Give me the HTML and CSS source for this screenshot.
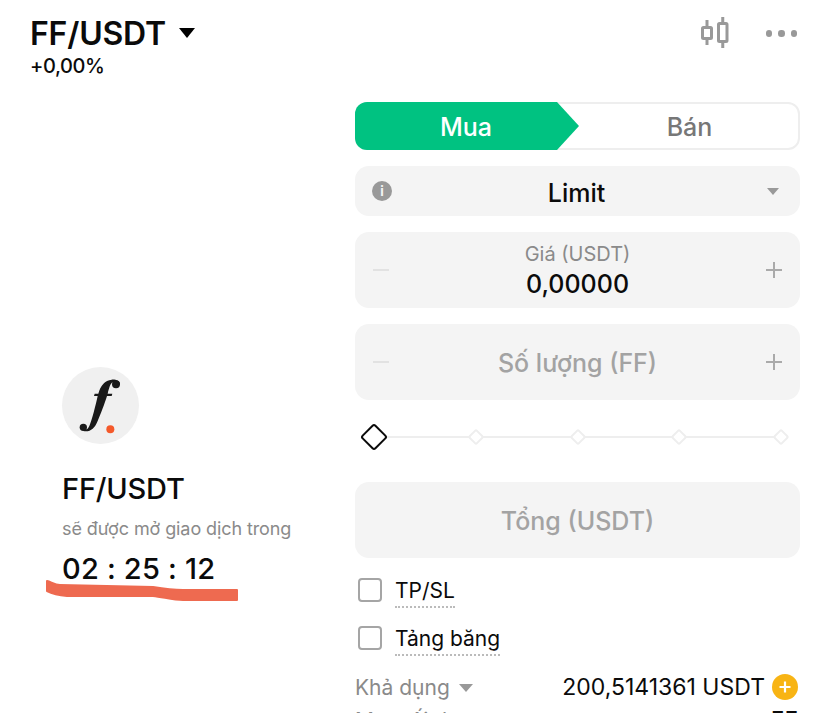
FILE: index.html
```html
<!DOCTYPE html>
<html lang="vi">
<head>
	<meta charset="UTF-8">
	<title>FF/USDT</title>
	<link rel="stylesheet" href="styles.css">
</head>
<body>
	<div class="page">
		<div class="header">
			<div>
				<div class="pair">FF/USDT <span class="pair_arrow"></span></div>
				<div class="change">+0,00%</div>
			</div>
			<div class="header_icons">
				<svg width="30" height="32" viewBox="0 0 30 32" fill="none" stroke="#999" stroke-width="3">
					<rect x="2.500" y="10.500" width="9" height="11" rx="1"/>
					<path d="M7 3v7.500M7 21.500v6.500"/>
					<rect x="18.500" y="6.500" width="8.500" height="18" rx="1"/>
					<path d="M22.750 0v6.500M22.750 24.500v6.500"/>
				</svg>
				<div class="dots"><span></span><span></span><span></span></div>
			</div>
		</div>

		<div class="main">
			<div class="left">
				<div class="logo">
					<svg width="77" height="77" viewBox="6 6 231 231" fill="#1a1a1a">
						<path d="M180 58C180 48 168 43 155 44C135 46 121 62 115 86L104 86L102 93L113 93C107 120 96 165 88 183C84 192 80 194 74 193L70 198C90 202 104 190 112 170C122 148 134 115 141 93L155 93L157 86L143 86C147 70 151 55 158 52C163 50 166 54 168 60Z"/>
						<circle cx="168" cy="58" r="12"/>
						<circle cx="70" cy="187" r="11"/>
						<circle cx="151" cy="193" r="12" fill="#f4592a"/>
					</svg>
				</div>
				<div class="left_pair">FF/USDT</div>
				<div class="left_note">sẽ được mở giao dịch trong</div>
				<div class="timer">02 : 25 : 12</div>
				<svg class="scribble" width="200" height="26" viewBox="0 0 200 26">
					<path d="M4 4C8 5 12 8 17 8L110 10C122 12 130 13 140 13L194 13L194 23L140 23C130 23 120 20 110 19L24 19C14 18 8 16 4 14Z" fill="#ee6a50" stroke="#ee6a50" stroke-width="2" stroke-linejoin="round"/>
				</svg>
			</div>

			<div class="form">
				<div class="tabs">
					<div class="tab_buy">Mua</div>
					<div class="tab_sell">Bán</div>
				</div>

				<div class="field field_select">
					<span class="info">i</span>
					<span class="select_text">Limit</span>
					<span class="arrow_gray"></span>
				</div>

				<div class="field field_input">
					<span class="minus"></span>
					<div class="input_mid">
						<div class="input_label">Giá (USDT)</div>
						<div class="input_value">0,00000</div>
					</div>
					<span class="plus"></span>
				</div>

				<div class="field field_input">
					<span class="minus"></span>
					<div class="input_mid placeholder">Số lượng (FF)</div>
					<span class="plus"></span>
				</div>

				<div class="slider">
					<span class="knob knob_active"></span>
					<span class="knob"></span>
					<span class="knob"></span>
					<span class="knob"></span>
					<span class="knob"></span>
				</div>

				<div class="field field_total">
					<div class="input_mid placeholder">Tổng (USDT)</div>
				</div>

				<div class="check_row">
					<span class="checkbox"></span>
					<span class="check_label">TP/SL</span>
				</div>
				<div class="check_row check_row2">
					<span class="checkbox"></span>
					<span class="check_label">Tảng băng</span>
				</div>

				<div class="avail">
					<span class="avail_label">Khả dụng <span class="arrow_small"></span></span>
					<span class="avail_value">200,5141361 USDT <span class="add">
						<svg width="14" height="14" viewBox="0 0 14 14" stroke="#fff" stroke-width="2.200"><path d="M7 1.500v11M1.500 7h11"/></svg>
					</span></span>
				</div>
				<div class="avail avail_cut">
					<span class="avail_label">Mua tối đa</span>
					<span class="avail_value">FF</span>
				</div>
			</div>
		</div>
	</div>
</body>
</html>
```

FILE: styles.css
```css
* {
	margin: 0;
	padding: 0;
	box-sizing: border-box;
}
html, body {
	height: 713px;
	overflow: hidden;
	background-color: #fff;
}
body {
	font-family: "Inter", "Liberation Sans", sans-serif;
	color: #0b0b0b;
}
.page {
	width: 829px;
	height: 713px;
	overflow: hidden;
}

/* header */
.header {
	display: flex;
	justify-content: space-between;
	height: 102px;
	padding: 15px 32px 0 30px;
}
.pair {
	display: flex;
	align-items: center;
	gap: 13px;
	height: 36px;
	font-size: 32px;
	font-weight: 600;
	letter-spacing: -0.2px;
}
.pair_arrow {
	width: 0;
	height: 0;
	border-left: 8.500px solid transparent;
	border-right: 8.500px solid transparent;
	border-top: 10px solid #000;
}
.change {
	margin-top: 2px;
	font-size: 20px;
	font-weight: 500;
	line-height: 26px;
	letter-spacing: -0.4px;
}
.header_icons {
	display: flex;
	align-items: flex-start;
	gap: 36px;
	padding-top: 2px;
}
.dots {
	display: flex;
	gap: 6px;
	padding-top: 13px;
}
.dots span {
	width: 6.500px;
	height: 6.500px;
	border-radius: 50%;
	background-color: #999;
}

/* main */
.main {
	display: flex;
}
.left {
	position: relative;
	width: 355px;
	padding: 265px 0 0 62px;
}
.logo {
	width: 77px;
	height: 77px;
	border-radius: 50%;
	background-color: #f0f0f0;
}
.logo svg {
	display: block;
}
.left_pair {
	margin-top: 27px;
	font-size: 29px;
	font-weight: 500;
	line-height: 36px;
	letter-spacing: -0.2px;
}
.left_note {
	margin-top: 10px;
	font-size: 18px;
	line-height: 24px;
	color: #8a8a8a;
	letter-spacing: -0.1px;
}
.timer {
	margin-top: 10px;
	font-size: 29px;
	font-weight: 500;
	line-height: 36px;
	letter-spacing: 0.2px;
}
.scribble {
	position: absolute;
	left: 43px;
	top: 475px;
}

/* form */
.form {
	width: 445px;
}
.tabs {
	display: flex;
	height: 48px;
	border: 2px solid #eee;
	border-radius: 12px;
	font-size: 25px;
	font-weight: 500;
}
.tab_buy {
	width: 224px;
	margin: -2px 0 -2px -2px;
	display: flex;
	align-items: center;
	justify-content: center;
	padding: 2px 2px 0 0;
	color: #fff;
	background-color: #00c281;
	border-radius: 12px 0 0 12px;
	clip-path: polygon(0 0, 202px 0, 224px 24px, 202px 100%, 0 100%);
}
.tab_sell {
	flex: 1;
	display: flex;
	align-items: center;
	justify-content: center;
	padding: 2px 0 0 2px;
	color: #777;
}
.field {
	display: flex;
	align-items: center;
	background-color: #f4f4f4;
	border-radius: 14px;
}
.field_select {
	display: grid;
	grid-template-columns: 1fr auto 1fr;
	height: 50px;
	margin-top: 16px;
	padding: 0 21px 0 17px;
}
.info {
	width: 20px;
	height: 20px;
	border-radius: 50%;
	background-color: #999;
	color: #f4f4f4;
	font-size: 13px;
	font-weight: 700;
	line-height: 20px;
	text-align: center;
}
.select_text {
	padding: 3px 0 0 2px;
	font-size: 25px;
	font-weight: 500;
}
.arrow_gray {
	justify-self: end;
	width: 0;
	height: 0;
	border-left: 6px solid transparent;
	border-right: 6px solid transparent;
	border-top: 7px solid #999;
}
.field_input {
	height: 76px;
	margin-top: 16px;
	padding: 0 18px;
	justify-content: space-between;
}
.minus {
	width: 16px;
	height: 2px;
	background-color: #e2e2e2;
}
.plus {
	position: relative;
	width: 16px;
	height: 2px;
	background-color: #aaa;
}
.plus::after {
	content: "";
	position: absolute;
	left: 7px;
	top: -7px;
	width: 2px;
	height: 16px;
	background-color: #aaa;
}
.input_mid {
	flex: 1;
	text-align: center;
}
.input_label {
	font-size: 20px;
	line-height: 24px;
	color: #8a8a8a;
}
.input_value {
	margin-top: 3px;
	font-size: 25px;
	font-weight: 500;
	line-height: 30px;
}
.placeholder {
	padding-top: 2px;
	font-size: 25px;
	font-weight: 500;
	color: #a3a3a3;
}
.slider {
	display: flex;
	justify-content: space-between;
	align-items: center;
	position: relative;
	height: 26px;
	margin: 24px 13px 0;
}
.slider::before {
	content: "";
	position: absolute;
	left: 6px;
	right: 6px;
	top: 12px;
	height: 2px;
	background-color: #eee;
}
.knob {
	position: relative;
	width: 12px;
	height: 12px;
	background-color: #fff;
	border: 2px solid #eee;
	border-radius: 2px;
	transform: rotate(45deg);
}
.knob_active {
	width: 20px;
	height: 20px;
	margin: 0 -4px;
	border-color: #0b0b0b;
	border-radius: 3px;
}
.field_total {
	height: 76px;
	margin-top: 32px;
}
.check_row {
	display: flex;
	align-items: center;
	gap: 13px;
	margin: 17px 0 0 3px;
	height: 30px;
}
.check_row2 {
	margin-top: 18px;
}
.checkbox {
	width: 24px;
	height: 24px;
	border: 2px solid #a5a5a5;
	border-radius: 4px;
}
.check_label {
	position: relative;
	top: 1px;
	font-size: 21px;
	line-height: 31px;
	border-bottom: 2px dotted #bbb;
}
.avail {
	display: flex;
	justify-content: space-between;
	align-items: center;
	margin-top: 19px;
	height: 30px;
	padding-right: 2px;
	font-size: 21px;
}
.avail_label {
	color: #8a8a8a;
}
.arrow_small {
	display: inline-block;
	margin-left: 3px;
	vertical-align: 3px;
	width: 0;
	height: 0;
	border-left: 7px solid transparent;
	border-right: 7px solid transparent;
	border-top: 8px solid #999;
}
.avail_value {
	display: flex;
	align-items: center;
	gap: 7px;
	font-size: 23px;
}
.add {
	width: 26px;
	height: 26px;
	border-radius: 50%;
	background-color: #f8b414;
	display: flex;
	align-items: center;
	justify-content: center;
}
.avail_cut {
	margin-top: 3px;
}
```
